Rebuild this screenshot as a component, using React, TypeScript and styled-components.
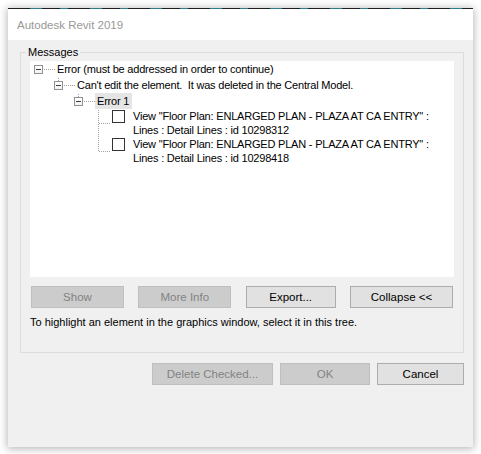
import React from 'react';
import styled, { createGlobalStyle } from 'styled-components';

const Global = createGlobalStyle`
  html, body { margin: 0; padding: 0; background: #ffffff; }
  #root { width: 481px; height: 454px; }
  * { box-sizing: border-box; }
`;

const uiFont = `'Liberation Sans', Arial, sans-serif`;

const Stage = styled.div`
  width: 481px;
  height: 454px;
  padding: 8px 8px 0 8px;
  background: #ffffff;
  overflow: hidden;
`;

const Window = styled.div`
  width: 465px;
  height: 439px;
  display: flex;
  flex-direction: column;
  background: #f0f0f0;
  box-shadow: 0 1px 8px 1px rgba(0, 0, 0, 0.28);
`;

const AccentEdge = styled.div`
  height: 1px;
  background: repeating-linear-gradient(
    90deg,
    #1e1e1e 0 22px,
    #2f7d8c 22px 34px,
    #1e1e1e 34px 52px,
    #2f7d8c 52px 60px
  );
`;

const TitleBar = styled.div`
  height: 31px;
  background: #ffffff;
  display: flex;
  align-items: center;
  padding-left: 9px;
  font-family: ${uiFont};
  font-size: 11.5px;
  color: #999999;
`;

const Body = styled.div`
  flex: 1;
  display: flex;
  flex-direction: column;
  padding: 4px 9px 0 12px;
  font-family: ${uiFont};
  font-size: 11px;
  color: #000;
`;

const Group = styled.fieldset`
  margin: 0;
  min-width: 0;
  border: 1px solid #dcdcdc;
  padding: 0 9px 22px 9px;
`;

const GroupLabel = styled.legend`
  padding: 0 2px;
  margin-left: -4px;
  line-height: 16px;
  font-size: 11px;
`;

const Tree = styled.div`
  position: relative;
  margin-top: 1px;
  height: 216px;
  background: #ffffff;
  font-family: ${uiFont};
  font-size: 11px;
  letter-spacing: -0.2px;
  color: #000;
`;

const Lines = styled.svg`
  position: absolute;
  left: 0;
  top: 0;
  width: 100%;
  height: 100%;
  pointer-events: none;
`;

const Node = styled.div<{ $level: number }>`
  display: flex;
  align-items: center;
  height: 16px;
  padding-left: ${(p) => 4 + p.$level * 20}px;
`;

const Expander = styled.span`
  position: relative;
  width: 9px;
  height: 9px;
  flex: none;
  border: 1px solid #919191;
  background: linear-gradient(#ffffff, #f2f2f2);
  &::after {
    content: '';
    position: absolute;
    left: 1px;
    top: 3px;
    width: 5px;
    height: 1px;
    background: #3a3a3a;
  }
`;

const Connector = styled.span`
  width: 12px;
  flex: none;
`;

const Label = styled.span<{ $selected?: boolean }>`
  height: 16px;
  line-height: 16px;
  padding: 0 3px 0 2px;
  white-space: pre;
  background: ${(p) => (p.$selected ? '#e5e5e5' : 'transparent')};
`;

const Item = styled.div`
  display: flex;
  align-items: flex-start;
  height: 28px;
  padding-left: 82px;
`;

const Check = styled.span`
  width: 13px;
  height: 13px;
  flex: none;
  margin-top: 1px;
  border: 1px solid #333333;
  background: #ffffff;
`;

const ItemText = styled.div`
  margin-left: 8px;
  line-height: 14px;
  white-space: pre;
`;

const ButtonRow = styled.div`
  display: flex;
  justify-content: space-between;
  margin: 9px 1px 0 1px;
`;

const Button = styled.button<{ $w: number }>`
  width: ${(p) => p.$w}px;
  height: 22px;
  padding: 0;
  margin: 0;
  border: 1px solid ${(p) => (p.disabled ? '#bfbfbf' : '#adadad')};
  background: ${(p) => (p.disabled ? '#cccccc' : '#e1e1e1')};
  color: ${(p) => (p.disabled ? '#838383' : '#000000')};
  font-family: ${uiFont};
  font-size: 11.5px;
  line-height: 20px;
`;

const Hint = styled.div`
  margin-top: 6px;
  line-height: 16px;
  font-size: 11px;
  white-space: nowrap;
`;

const Footer = styled.div`
  display: flex;
  justify-content: flex-end;
  gap: 7px;
  margin-top: 10px;
`;

const items = [
  ['View "Floor Plan: ENLARGED PLAN - PLAZA AT CA ENTRY" :', 'Lines : Detail Lines : id 10298312'],
  ['View "Floor Plan: ENLARGED PLAN - PLAZA AT CA ENTRY" :', 'Lines : Detail Lines : id 10298418'],
];

export default function App() {
  return (
    <Stage>
      <Global />
      <Window>
        <AccentEdge />
        <TitleBar>Autodesk Revit 2019</TitleBar>
        <Body>
          <Group>
            <GroupLabel>Messages</GroupLabel>
            <Tree>
              <Lines>
                <g stroke="#a0a0a0" strokeWidth="1" strokeDasharray="1 1" fill="none">
                  <line x1="14" y1="8.5" x2="25" y2="8.5" />
                  <line x1="28.5" y1="17" x2="28.5" y2="20" />
                  <line x1="34" y1="24.5" x2="45" y2="24.5" />
                  <line x1="48.5" y1="33" x2="48.5" y2="36" />
                  <line x1="54" y1="40.5" x2="65" y2="40.5" />
                  <line x1="68.5" y1="49" x2="68.5" y2="90" />
                  <line x1="69" y1="62.5" x2="80" y2="62.5" />
                  <line x1="69" y1="90.5" x2="80" y2="90.5" />
                </g>
              </Lines>
              <Node $level={0}>
                <Expander />
                <Connector />
                <Label>Error (must be addressed in order to continue)</Label>
              </Node>
              <Node $level={1}>
                <Expander />
                <Connector />
                <Label>Can't edit the element.  It was deleted in the Central Model.</Label>
              </Node>
              <Node $level={2}>
                <Expander />
                <Connector />
                <Label $selected>Error 1</Label>
              </Node>
              {items.map((lines, i) => (
                <Item key={i}>
                  <Check />
                  <ItemText>
                    {lines[0]}
                    {'\n'}
                    {lines[1]}
                  </ItemText>
                </Item>
              ))}
            </Tree>
            <ButtonRow>
              <Button $w={93} disabled>Show</Button>
              <Button $w={93} disabled>More Info</Button>
              <Button $w={90}>Export...</Button>
              <Button $w={103}>Collapse &lt;&lt;</Button>
            </ButtonRow>
            <Hint>To highlight an element in the graphics window, select it in this tree.</Hint>
          </Group>
          <Footer>
            <Button $w={121} disabled>Delete Checked...</Button>
            <Button $w={90} disabled>OK</Button>
            <Button $w={87}>Cancel</Button>
          </Footer>
        </Body>
      </Window>
    </Stage>
  );
}
